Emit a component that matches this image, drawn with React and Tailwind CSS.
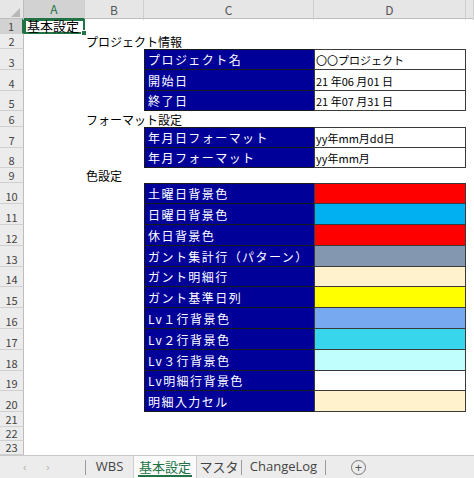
import { Fragment } from "react";

const JP = "font-['Noto_Sans_CJK_JP','Noto_Sans',sans-serif]";

const ROWS = [
  { n: 1, h: 15 },
  { n: 2, h: 15, b: "プロジェクト情報" },
  { n: 3, h: 21, c: "プロジェクト名", d: "〇〇プロジェクト", first: true },
  { n: 4, h: 21, c: "開始日", d: "21 年06 月01 日" },
  { n: 5, h: 20, c: "終了日", d: "21 年07 月31 日" },
  { n: 6, h: 16, b: "フォーマット設定" },
  { n: 7, h: 21, c: "年月日フォーマット", d: "yy年mm月dd日", first: true },
  { n: 8, h: 20, c: "年月フォーマット", d: "yy年mm月" },
  { n: 9, h: 15, b: "色設定" },
  { n: 10, h: 21, c: "土曜日背景色", bg: "bg-[#ff0000]", first: true },
  { n: 11, h: 21, c: "日曜日背景色", bg: "bg-[#00b0f0]" },
  { n: 12, h: 21, c: "休日背景色", bg: "bg-[#ff0000]" },
  { n: 13, h: 21, c: "ガント集計行（パターン）", bg: "bg-[#8497b0]" },
  { n: 14, h: 20, c: "ガント明細行", bg: "bg-[#fff2cc]" },
  { n: 15, h: 21, c: "ガント基準日列", bg: "bg-[#ffff00]" },
  { n: 16, h: 21, c: "Lv１行背景色", bg: "bg-[#76a9ef]" },
  { n: 17, h: 21, c: "Lv２行背景色", bg: "bg-[#38d6ec]" },
  { n: 18, h: 21, c: "Lv３行背景色", bg: "bg-[#c0fdfd]" },
  { n: 19, h: 20, c: "Lv明細行背景色", bg: "bg-white" },
  { n: 20, h: 21, c: "明細入力セル", bg: "bg-[#fff2cc]" },
  { n: 21, h: 15 },
  { n: 22, h: 14 },
  { n: 23, h: 14 },
];

const GRID = "grid grid-cols-[24px_61px_59px_170px_152px_1fr]";

function ColumnHeader() {
  const heads = ["A", "B", "C", "D", ""];
  return (
    <div className={`${GRID} h-[19px] bg-[#e6e6e6] border-b border-[#bdbdbd]`}>
      <div className="relative border-r border-[#bdbdbd]">
        <svg className="absolute right-[3px] bottom-[3px]" width="9" height="9" viewBox="0 0 9 9">
          <polygon points="9,0 9,9 0,9" fill="#b8b8b8" />
        </svg>
      </div>
      {heads.map((h, i) => (
        <div
          key={i}
          className={`flex items-center justify-center text-[12px] text-[#555] border-r border-[#cfcfcf] ${
            i === 0 ? "bg-[#d2d2d2] text-[#217346] border-b-2 border-b-[#217346]" : ""
          }`}
        >
          {h}
        </div>
      ))}
    </div>
  );
}

function SheetRow({ r }) {
  const blue = r.c !== undefined;
  return (
    <div className={GRID} style={{ height: r.h }}>
      <div
        className={`flex items-end justify-center overflow-hidden text-[11px] leading-[11px] pb-[1px] text-[#444] border-r border-[#bdbdbd] border-b border-b-[#d0d0d0] ${
          r.n === 1 ? "bg-[#d2d2d2] border-r-2 border-r-[#217346]" : "bg-[#ececec]"
        }`}
      >
        {r.n}
      </div>
      <div className="relative">
        {r.n === 1 && (
          <div className="absolute inset-0 border-2 border-[#217346] flex items-end pl-[1px] text-[13px] leading-[13px] text-black z-10">
            基本設定
            <span className="absolute -right-[4px] -bottom-[4px] w-[6px] h-[6px] bg-[#217346] border border-white" />
          </div>
        )}
      </div>
      <div className="relative">
        {r.b && (
          <span className="absolute left-[1px] bottom-0 whitespace-nowrap text-[12px] leading-[14px] text-black z-10">
            {r.b}
          </span>
        )}
      </div>
      {blue ? (
        <div
          className={`flex items-end pl-[3px] pb-[1px] bg-[#000099] text-white text-[12px] leading-[16px] tracking-[0.12em] whitespace-nowrap border-l border-b border-[#1a1a1a] ${
            r.first ? "border-t" : ""
          }`}
        >
          {r.c}
        </div>
      ) : (
        <div />
      )}
      {blue ? (
        <div
          className={`flex items-end pl-[1px] pb-[2px] text-[11px] leading-[14px] text-black whitespace-nowrap border-l border-r border-b border-[#3a3a3a] ${
            r.bg || "bg-white"
          } ${r.first ? "border-t" : ""}`}
        >
          {r.d}
        </div>
      ) : (
        <div />
      )}
      <div />
    </div>
  );
}

function TabBar() {
  return (
    <div className="flex items-center h-[23px] bg-[#ececec] border-t border-[#c8c8c8] text-[13px] text-[#444] font-['Open_Sans','Noto_Sans_CJK_JP',sans-serif]">
      <div className="w-[85px] h-full flex items-center text-[#b0b0b0] text-[11px]">
        <span className="ml-[23px]">‹</span>
        <span className="ml-[20px]">›</span>
      </div>
      <div className="w-px h-[15px] bg-[#9a9a9a]" />
      <div className="w-[47px] text-center">WBS</div>
      <div className="w-[64px] h-full flex items-center justify-center bg-[#fafafa] text-[#217346] border-x border-[#cfcfcf] relative">
        <span className={JP}>基本設定</span>
        <span className="absolute left-[4px] right-[4px] bottom-[1px] h-[2px] bg-[#217346]" />
      </div>
      <div className={`w-[44px] text-center ${JP}`}>マスタ</div>
      <div className="w-px h-[15px] bg-[#9a9a9a]" />
      <div className="w-[83px] text-center">ChangeLog</div>
      <div className="w-px h-[15px] bg-[#9a9a9a]" />
      <div className="ml-[25px] w-[15px] h-[15px] rounded-full border border-[#777] flex items-center justify-center text-[#555] text-[13px] leading-none">
        +
      </div>
    </div>
  );
}

export default function App() {
  return (
    <div className={`w-[474px] h-[478px] bg-white overflow-hidden flex flex-col ${JP}`}>
      <ColumnHeader />
      {ROWS.map((r) => (
        <Fragment key={r.n}>
          <SheetRow r={r} />
        </Fragment>
      ))}
      <div className="flex-1" />
      <TabBar />
    </div>
  );
}
